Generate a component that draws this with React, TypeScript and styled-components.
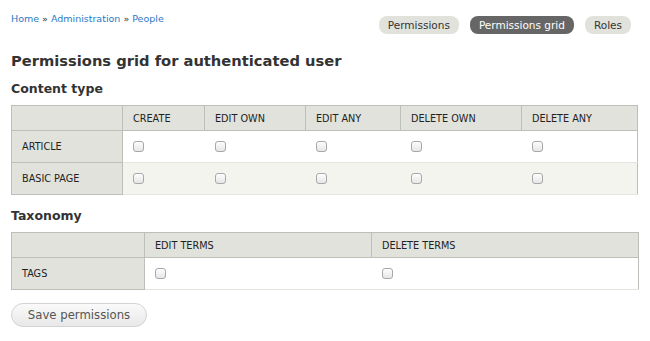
import React from 'react'
import styled, { createGlobalStyle } from 'styled-components'

const GlobalStyle = createGlobalStyle`
  html, body {
    margin: 0;
    padding: 0;
    background: #fff;
  }
  body {
    font-family: "DejaVu Sans", Verdana, sans-serif;
    color: #333;
  }
`

const Page = styled.div`
  width: 650px;
  height: 341px;
  box-sizing: border-box;
  padding: 10px 12px 0 11px;
  overflow: hidden;
`

const TopBar = styled.div`
  display: flex;
  justify-content: space-between;
  align-items: center;
  height: 30px;
  padding-right: 7px;
`

const Breadcrumb = styled.div`
  font-size: 9.5px;
  align-self: flex-start;
  margin-top: 3px;
  a {
    color: #2a7ac7;
    text-decoration: none;
  }
`

const Sep = styled.span`
  color: #333;
  margin: 0 3px;
`

const Tabs = styled.ul`
  display: flex;
  gap: 11px;
  list-style: none;
  margin: 0;
  padding: 0;
`

const Tab = styled.li<{ $active?: boolean }>`
  font-size: 10.5px;
  line-height: 18px;
  padding: 0 9px;
  border-radius: 8px;
  background: ${({ $active }) => ($active ? '#666' : '#e1e2dc')};
  color: ${({ $active }) => ($active ? '#fff' : '#333')};
`

const Title = styled.h1`
  font-size: 14.7px;
  font-weight: bold;
  margin: 11px 0 0;
  line-height: 20px;
  color: #333;
`

const Section = styled.h2<{ $gap?: number }>`
  font-size: 12.5px;
  font-weight: bold;
  margin: ${({ $gap }) => $gap ?? 8}px 0 0;
  line-height: 20px;
  color: #333;
`

const Grid = styled.table`
  border-collapse: collapse;
  width: 627px;
  table-layout: fixed;
  margin-top: 6px;
  border: 1px solid #bebfb9;
  font-size: 9.7px;
`

const Th = styled.th`
  background: #e1e2dc;
  text-align: left;
  font-weight: normal;
  height: 24px;
  padding: 0 10px;
  border: 1px solid #bebfb9;
  border-top: none;
  color: #222;
`

const RowHead = styled.td`
  background: #e1e2dc;
  padding: 0 10px;
  border: 1px solid #bebfb9;
  border-left: none;
  color: #222;
`

const Row = styled.tr<{ $even?: boolean }>`
  height: 32px;
  background: ${({ $even }) => ($even ? '#f3f4ee' : '#fff')};
`

const Cell = styled.td`
  padding: 0 10px;
  border-bottom: 1px solid #e4e5df;
`

const Box = styled.span`
  display: inline-block;
  width: 9px;
  height: 9px;
  border: 1px solid #a8a8a8;
  border-radius: 3px;
  background: linear-gradient(#fdfdfd, #e6e6e6);
  vertical-align: middle;
  box-shadow: inset 0 1px 0 #fff;
`

const SaveButton = styled.button`
  margin-top: 13px;
  width: 136px;
  height: 24px;
  border: 1px solid #d3d3d3;
  border-radius: 12px;
  background: linear-gradient(#fafafa, #e8e8e8);
  font-family: "DejaVu Sans", Verdana, sans-serif;
  font-size: 11.7px;
  color: #555;
  padding: 0;
`

const contentCols = [
  { label: 'CREATE', w: 82 },
  { label: 'EDIT OWN', w: 101 },
  { label: 'EDIT ANY', w: 95 },
  { label: 'DELETE OWN', w: 121 },
  { label: 'DELETE ANY', w: 116 }
]

const contentRows = ['ARTICLE', 'BASIC PAGE']

const taxCols = [
  { label: 'EDIT TERMS', w: 227 },
  { label: 'DELETE TERMS', w: 267 }
]

export default function App() {
  return (
    <>
      <GlobalStyle />
      <Page>
        <TopBar>
          <Breadcrumb>
            <a href="#">Home</a>
            <Sep>»</Sep>
            <a href="#">Administration</a>
            <Sep>»</Sep>
            <a href="#">People</a>
          </Breadcrumb>
          <Tabs>
            <Tab>Permissions</Tab>
            <Tab $active>Permissions grid</Tab>
            <Tab>Roles</Tab>
          </Tabs>
        </TopBar>

        <Title>Permissions grid for authenticated user</Title>

        <Section>Content type</Section>
        <Grid>
          <colgroup>
            <col style={{ width: 111 }} />
            {contentCols.map(c => (
              <col key={c.label} style={{ width: c.w }} />
            ))}
          </colgroup>
          <thead>
            <tr>
              <Th />
              {contentCols.map(c => (
                <Th key={c.label}>{c.label}</Th>
              ))}
            </tr>
          </thead>
          <tbody>
            {contentRows.map((r, i) => (
              <Row key={r} $even={i % 2 === 1}>
                <RowHead>{r}</RowHead>
                {contentCols.map(c => (
                  <Cell key={c.label}>
                    <Box />
                  </Cell>
                ))}
              </Row>
            ))}
          </tbody>
        </Grid>

        <Section $gap={11}>Taxonomy</Section>
        <Grid>
          <colgroup>
            <col style={{ width: 133 }} />
            {taxCols.map(c => (
              <col key={c.label} style={{ width: c.w }} />
            ))}
          </colgroup>
          <thead>
            <tr>
              <Th />
              {taxCols.map(c => (
                <Th key={c.label}>{c.label}</Th>
              ))}
            </tr>
          </thead>
          <tbody>
            <Row>
              <RowHead>TAGS</RowHead>
              {taxCols.map(c => (
                <Cell key={c.label}>
                  <Box />
                </Cell>
              ))}
            </Row>
          </tbody>
        </Grid>

        <SaveButton>Save permissions</SaveButton>
      </Page>
    </>
  )
}
